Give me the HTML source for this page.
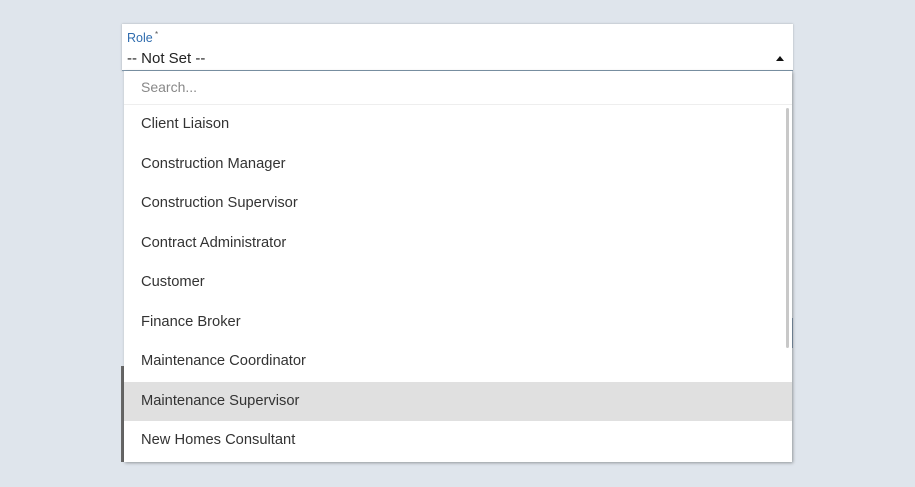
<!DOCTYPE html>
<html><head><style>
body{margin:0;width:915px;height:487px;background:#dfe5ec;font-family:"Liberation Sans",sans-serif;position:relative;overflow:hidden}
.top{position:absolute;left:122px;top:24px;width:671px;height:46px;background:#fff;box-shadow:0 0 2px rgba(0,0,0,.25);border-bottom:1px solid #7f97ab}
.lbl{position:absolute;left:5px;top:6px;font-size:12.5px;color:#2f6cae}
.lbl sup{font-size:8px;color:#555}
.val{position:absolute;left:5px;top:26px;font-size:15px;color:#222}
.arr{position:absolute;right:9px;top:32px;width:0;height:0;border-left:4px solid transparent;border-right:4px solid transparent;border-bottom:5px solid #111}
.bar{position:absolute;left:121px;top:366px;width:3px;height:96px;background:#666}
.dd{position:absolute;left:124px;top:71px;width:668px;height:391px;background:#fff;box-shadow:1px 1px 3px rgba(0,0,0,.35)}
.s{height:33px;border-bottom:1px solid #eee;font-size:14px;color:#888;line-height:33px;padding-left:17px}
.i{height:39.5px;line-height:39.5px;font-size:14.7px;color:#333;padding-left:17px}
.h{background:#e0e0e0}
.sb{position:absolute;left:662px;top:37px;width:3px;height:240px;background:#c8c8c8;border-radius:2px}
.blue{position:absolute;left:791px;top:318px;width:2px;height:30px;background:#8aa0b5}
</style></head><body>
<div class="top"><div class="lbl">Role<sup> *</sup></div><div class="val">-- Not Set --</div><div class="arr"></div></div>
<div class="bar"></div>
<div class="blue"></div>
<div class="dd">
<div class="s">Search...</div>
<div class="i">Client Liaison</div>
<div class="i">Construction Manager</div>
<div class="i">Construction Supervisor</div>
<div class="i">Contract Administrator</div>
<div class="i">Customer</div>
<div class="i">Finance Broker</div>
<div class="i">Maintenance Coordinator</div>
<div class="i h">Maintenance Supervisor</div>
<div class="i">New Homes Consultant</div>
<div class="sb"></div>
</div>
</body></html>
